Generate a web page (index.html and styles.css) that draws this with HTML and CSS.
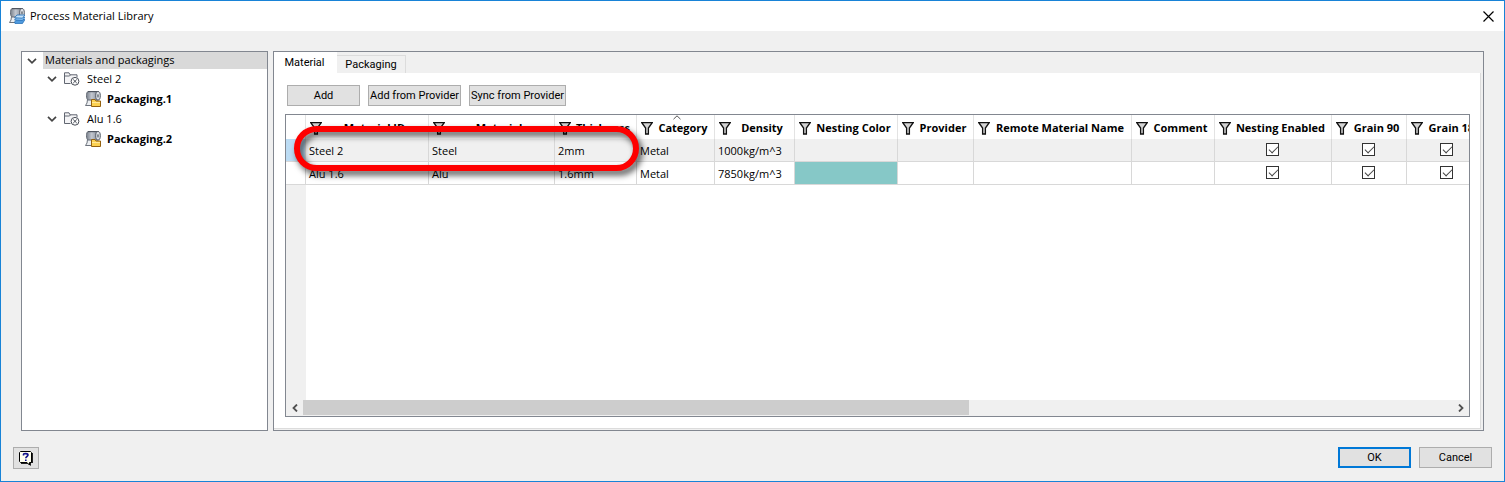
FILE: index.html
```html
<!DOCTYPE html>
<html lang="en">
<head>
<meta charset="utf-8">
<title>Process Material Library</title>
<link rel="stylesheet" href="styles.css">
</head>
<body>
<svg class="defs" aria-hidden="true">
  <defs>
    <linearGradient id="steel" x1="0" x2="1" y1="0" y2="0">
      <stop offset="0" stop-color="#7a818c"/><stop offset=".45" stop-color="#c3c8d0"/><stop offset="1" stop-color="#858c98"/>
    </linearGradient>
    <symbol id="funnel" viewBox="0 0 12 13">
      <path d="M.8.7h10.4L7.4 6v6H4.6V6z" fill="#d4d4d4" stroke="#111" stroke-width="1.3"/>
    </symbol>
    <symbol id="coil" viewBox="0 0 16 16">
      <path d="M2.500 8.500L2 12 .5 14.500H9V8.500z" fill="#eceff2" stroke="#6d737d"/>
      <path d="M3 .5h10v8.500H3C1 8.500 1 1 3 .5z" fill="url(#steel)" stroke="#646b76"/>
      <path d="M3 .7h10" stroke="#4c525c"/>
      <ellipse cx="13" cy="4.800" rx="2.300" ry="4.300" fill="#dfe3e8" stroke="#555b66"/>
      <ellipse cx="13" cy="4.800" rx=".7" ry="1.900" fill="#596069"/>
    </symbol>
    <symbol id="coil-folder" viewBox="0 0 16 16">
      <use href="#coil"/>
      <path d="M6.500 15.500V8.500h3.500l1 1.500h4.500v5.500z" fill="#fbd050" stroke="#94610f"/>
      <path d="M7 11.500h8" stroke="#ffe79a"/>
    </symbol>
    <symbol id="coil-stack" viewBox="0 0 16 16">
      <use href="#coil"/>
      <path d="M5.500 14l2.500-2.500h8L13.500 15.500H6z" fill="#4f9ade" stroke="#1d68b2" stroke-width=".7"/>
      <path d="M5.500 12L8 9.300h8L13.500 12.400z" fill="#8fc5f3" stroke="#1d68b2" stroke-width=".8"/>
      <path d="M5.500 9.800L8 7h8l-2.500 3.200z" fill="#c5e3fb" stroke="#1d68b2" stroke-width=".8"/>
    </symbol>
    <symbol id="material" viewBox="0 0 16 14">
      <path d="M6.500 11.500h-6V.8h4.500l1 2h7v2.500M.5 4h5l1-1.200" fill="#f4f4f6" stroke="#616671"/>
      <circle cx="11" cy="9.300" r="3.900" fill="#fff" stroke="#484d57"/>
      <path d="M9.200 7.500l3.600 3.600M12.800 7.500l-3.600 3.600" stroke="#484d57"/>
    </symbol>
    <symbol id="chevron" viewBox="0 0 10 6">
      <path d="M1 .8l4 4 4-4" fill="none" stroke="#444" stroke-width="1.700"/>
    </symbol>
  </defs>
</svg>
<main class="window">
  <header class="titlebar">
    <svg class="icon"><use href="#coil-stack"/></svg>
    <h1 class="title">Process Material Library</h1>
    <button class="close" aria-label="Close"><svg viewBox="0 0 11 11"><path d="M.5.5l10 10M10.500.5l-10 10" stroke="#000" stroke-width="1.200"/></svg></button>
  </header>

  <div class="content">
    <nav class="tree" aria-label="Materials">
      <div class="node root"><svg class="chevron"><use href="#chevron"/></svg><span class="selected">Materials and packagings</span></div>
      <div class="node level1"><svg class="chevron"><use href="#chevron"/></svg><svg class="icon"><use href="#material"/></svg><span>Steel 2</span></div>
      <div class="node level2"><svg class="icon"><use href="#coil-folder"/></svg><span>Packaging.1</span></div>
      <div class="node level1"><svg class="chevron"><use href="#chevron"/></svg><svg class="icon"><use href="#material"/></svg><span>Alu 1.6</span></div>
      <div class="node level2"><svg class="icon"><use href="#coil-folder"/></svg><span>Packaging.2</span></div>
    </nav>

    <section class="details">
      <div class="tabs" role="tablist">
        <button class="tab active" role="tab" aria-selected="true">Material</button>
        <button class="tab" role="tab" aria-selected="false">Packaging</button>
      </div>
      <div class="pane">
        <div class="toolbar">
          <button class="button">Add</button>
          <button class="button wide">Add from Provider</button>
          <button class="button wider">Sync from Provider</button>
        </div>
        <div class="grid-box">
          <div class="grid-view">
            <table class="grid">
              <colgroup>
                <col class="c-head"><col class="c-id"><col class="c-material"><col class="c-thick"><col class="c-cat"><col class="c-density"><col class="c-color"><col class="c-provider"><col class="c-remote"><col class="c-comment"><col class="c-nesting"><col class="c-g90"><col class="c-g180">
              </colgroup>
              <thead>
                <tr>
                  <td></td>
                  <th><div class="head"><svg><use href="#funnel"/></svg><span>Material ID</span></div></th>
                  <th><div class="head"><svg><use href="#funnel"/></svg><span>Material</span></div></th>
                  <th><div class="head"><svg><use href="#funnel"/></svg><span>Thickness</span></div></th>
                  <th class="sorted"><svg class="sort" viewBox="0 0 8 5"><path d="M.5 4.200L4 .8l3.500 3.400" fill="none" stroke="#555"/></svg><div class="head"><svg><use href="#funnel"/></svg><span>Category</span></div></th>
                  <th><div class="head"><svg><use href="#funnel"/></svg><span>Density</span></div></th>
                  <th><div class="head"><svg><use href="#funnel"/></svg><span>Nesting Color</span></div></th>
                  <th><div class="head"><svg><use href="#funnel"/></svg><span>Provider</span></div></th>
                  <th><div class="head"><svg><use href="#funnel"/></svg><span>Remote Material Name</span></div></th>
                  <th><div class="head"><svg><use href="#funnel"/></svg><span>Comment</span></div></th>
                  <th><div class="head"><svg><use href="#funnel"/></svg><span>Nesting Enabled</span></div></th>
                  <th><div class="head"><svg><use href="#funnel"/></svg><span>Grain 90</span></div></th>
                  <th><div class="head"><svg><use href="#funnel"/></svg><span>Grain 180</span></div></th>
                </tr>
              </thead>
              <tbody>
                <tr class="current">
                  <td class="marker"></td><td>Steel 2</td><td>Steel</td><td>2mm</td><td>Metal</td><td>1000kg/m^3</td><td></td><td></td><td></td><td></td>
                  <td class="check"><input type="checkbox" checked aria-label="Nesting Enabled, Steel 2"></td>
                  <td class="check"><input type="checkbox" checked aria-label="Grain 90, Steel 2"></td>
                  <td class="check"><input type="checkbox" checked aria-label="Grain 180, Steel 2"></td>
                </tr>
                <tr>
                  <td class="marker"></td><td>Alu 1.6</td><td>Alu</td><td>1.6mm</td><td>Metal</td><td>7850kg/m^3</td><td class="teal"></td><td></td><td></td><td></td>
                  <td class="check"><input type="checkbox" checked aria-label="Nesting Enabled, Alu 1.6"></td>
                  <td class="check"><input type="checkbox" checked aria-label="Grain 90, Alu 1.6"></td>
                  <td class="check"><input type="checkbox" checked aria-label="Grain 180, Alu 1.6"></td>
                </tr>
              </tbody>
            </table>
            <div class="gutter"></div>
          </div>
          <div class="scrollbar">
            <button class="arrow" aria-label="Scroll left"><svg viewBox="0 0 6 8"><path d="M5 .5L1.500 4 5 7.500" fill="none" stroke="#505050" stroke-width="1.800"/></svg></button>
            <div class="track"><div class="thumb"></div></div>
            <button class="arrow" aria-label="Scroll right"><svg viewBox="0 0 6 8"><path d="M1 .5L4.500 4 1 7.500" fill="none" stroke="#505050" stroke-width="1.800"/></svg></button>
          </div>
          <div class="highlight"></div>
        </div>
      </div>
    </section>
  </div>

  <footer class="footer">
    <button class="button help" aria-label="Help">
      <svg viewBox="0 0 14 15"><path d="M2 2h12v10h-2v3l-3-2H2z" fill="#222"/><path d="M1.500.5h10l1 1v10h-2V14l-2.500-2.500h-6.500l-1-1v-9z" fill="#fffff0" stroke="#000"/><path d="M4.500 4.500V3.500c0-1.200 4.500-1.300 4.500.5 0 1.500-2.200 1.500-2.200 3.200M6.800 8.500v1.500" fill="none" stroke="#10108c" stroke-width="1.600"/></svg>
    </button>
    <span class="spacer"></span>
    <button class="button primary">OK</button>
    <button class="button">Cancel</button>
  </footer>
</main>
</body>
</html>
```

FILE: styles.css
```css
* { box-sizing: border-box; }
body {
  margin: 0;
  font: 11px/16px "Open Sans", "Noto Sans", sans-serif;
  color: #000;
}
button { font: inherit; color: inherit; margin: 0; padding: 0; border: 0; background: none; }
svg { display: block; flex: none; }
.defs { position: absolute; width: 0; height: 0; }

.window {
  display: flex;
  flex-direction: column;
  min-height: 100vh;
  border: 1px solid #1883d7;
  background: #f0f0f0;
}
.titlebar {
  display: flex;
  align-items: center;
  height: 30px;
  padding: 0 10px 0 8px;
  gap: 5px;
  background: #fff;
}
.icon { width: 16px; height: 16px; }
.title { flex: 1; margin: 0; font-size: 11px; font-weight: 400; }
.close svg { width: 11px; height: 11px; }

.content {
  flex: 1;
  display: flex;
  gap: 5px;
  padding: 20px 20px 0;
}
.tree {
  width: 247px;
  flex: none;
  border: 1px solid #828790;
  background: #fff;
}
.node { display: flex; align-items: center; height: 20px; }
.chevron { width: 10px; height: 6px; }
.root { height: 17px; padding-left: 5px; gap: 8px; }
.selected { flex: 1; height: 17px; background: #d9d9d9; box-shadow: -2px 0 #d9d9d9; }
.level1 { padding-left: 25px; gap: 7px; }
.level1 .icon { height: 14px; }
.level2 { padding-left: 63px; gap: 6px; font-weight: 700; }

.details {
  flex: 1;
  min-width: 0;
  display: flex;
  flex-direction: column;
  border: 1px solid #828790;
  padding-right: 2px;
  padding-bottom: 1px;
}
.tabs { display: flex; align-items: flex-end; }
.tab {
  width: 69px;
  height: 18px;
  border: 1px solid #dcdcdc;
  border-left: 0;
  border-bottom: 0;
}
.tab, .button { font-family: Roboto, "Open Sans", sans-serif; }
.tab.active { width: 63px; height: 21px; border: 0; padding: 0 2px 0 0; background: #fff; }
.pane {
  flex: 1;
  display: flex;
  flex-direction: column;
  gap: 8px;
  padding: 12px 10px 11px 11px;
  background: #fff;
  border: 1px solid #dcdcdc;
  border-left: 0;
  border-top: 0;
}
.toolbar { display: flex; gap: 8px; padding-left: 2px; }
.button {
  width: 73px;
  height: 21px;
  border: 1px solid #adadad;
  background: #e1e1e1;
  white-space: nowrap;
}
.button.wide { width: 93px; }
.button.wider { width: 97px; }

.grid-box {
  position: relative;
  flex: 1;
  display: flex;
  flex-direction: column;
  border: 1px solid #828790;
}
.grid-view { flex: 1; display: flex; flex-direction: column; overflow: hidden; }
.grid { flex: none; width: 1202px; table-layout: fixed; border-collapse: separate; border-spacing: 0; }
.gutter { flex: 1; width: 20px; background: #f0f0f0; }
.c-head { width: 20px; }
.c-id { width: 123px; }
.c-material { width: 126px; }
.c-thick { width: 82px; }
.c-cat { width: 78px; }
.c-density { width: 80px; }
.c-color { width: 103px; }
.c-provider { width: 76px; }
.c-remote { width: 158px; }
.c-comment { width: 83px; }
.c-nesting { width: 117px; }
.c-g90 { width: 75px; }
.c-g180 { width: 81px; }
.grid th, .grid td {
  height: 23px;
  padding: 2px 3px 0;
  border-right: 1px solid #d8d8d8;
  white-space: nowrap;
}
.grid th, .grid thead td { height: 24px; border-right-color: #e3e3e3; }
.grid tbody td { border-bottom: 1px solid #d8d8d8; }
.grid th { font-weight: 700; padding: 2px 5px 0 4px; }
.head { display: flex; align-items: center; gap: 4px; }
.head svg { width: 12px; height: 13px; }
.head span { flex: 1; text-align: center; }
.sorted { position: relative; }
.sort { position: absolute; top: 0; left: 36px; width: 8px; height: 5px; }
.current td { background: #f0f0f0; }
.grid .current .marker { background: #bcdcf4; }
.grid .teal { background: #86c8c7; }
.grid .check { padding: 0 2px 1px 0; }
.check input {
  appearance: none;
  display: block;
  width: 13px;
  height: 13px;
  margin: 0 auto;
  border: 1px solid #333;
  background: #fff;
}
.check input:checked::before {
  content: "";
  display: block;
  width: 8px;
  height: 4px;
  margin: 2px 0 0 2px;
  border: solid #444;
  border-width: 0 0 1px 1px;
  transform: rotate(-45deg);
}

.scrollbar { display: flex; height: 16px; background: #f0f0f0; }
.arrow { width: 17px; display: grid; place-items: center; }
.arrow svg { width: 6px; height: 8px; }
.track { flex: 1; }
.thumb { width: 58%; height: 15px; background: #cdcdcd; }
.highlight {
  position: absolute;
  left: 8px;
  top: 11px;
  width: 345px;
  height: 45px;
  border: 6px solid #fe0000;
  border-radius: 23px;
  filter: drop-shadow(3px 4px 3px rgba(0, 0, 0, .7));
  pointer-events: none;
}

.footer { display: flex; gap: 8px; padding: 16px 12px 12px; }
.help { width: 26px; height: 22px; display: grid; place-items: center; }
.help svg { width: 14px; height: 15px; }
.spacer { flex: 1; }
.primary { border: 2px solid #0078d7; }
```
